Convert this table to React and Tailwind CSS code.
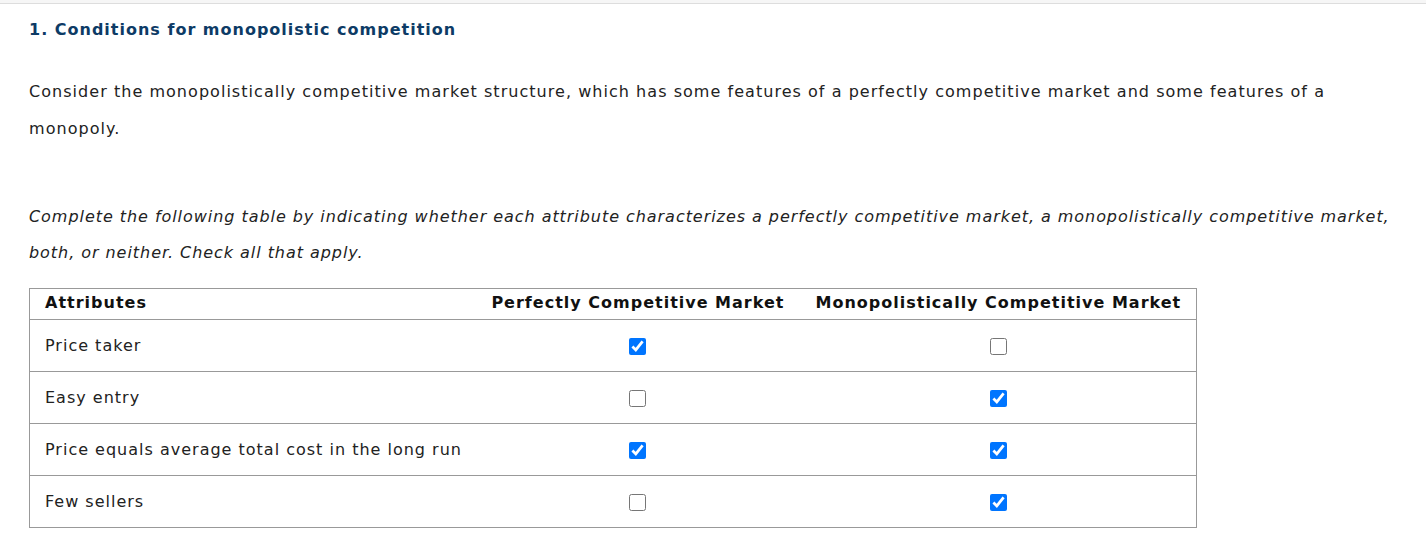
const ROWS = [
    { label: 'Price taker', perfect: true, mono: false },
    { label: 'Easy entry', perfect: false, mono: true },
    { label: 'Price equals average total cost in the long run', perfect: true, mono: true },
    { label: 'Few sellers', perfect: false, mono: true },
];

function Box({ checked }) {
    return (
        <input
            type="checkbox"
            checked={checked}
            readOnly
            className="m-0 h-[17px] w-[17px] align-middle accent-[#0075ff]"
        />
    );
}

export default function App() {
    return (
        <div className="min-h-[558px] bg-white text-[#222] font-['DejaVu_Sans',Verdana,sans-serif]">
            <div className="h-[4px] bg-[#f6f6f6] border-b border-[#dddddd]" />

            <div className="pl-[29px]">
                <h1 className="mt-[15px] text-[16px] leading-[22px] font-bold tracking-[1px] text-[#0d3b66]">
                    1. Conditions for monopolistic competition
                </h1>

                <p className="mt-[32px] text-[16px] leading-[37px] tracking-[1.04px] pr-[70px]">
                    Consider the monopolistically competitive market structure, which has some features of a perfectly competitive market and some features of a monopoly.
                </p>

                <p className="mt-[52px] text-[16px] leading-[36px] italic tracking-[0.95px]">
                    Complete the following table by indicating whether each attribute characterizes a perfectly competitive market, a monopolistically competitive market, both, or neither. Check all that apply.
                </p>

                <table className="mt-[17px] w-[1168px] border-collapse border border-[#999] text-[16px] tracking-[1px]">
                    <thead>
                        <tr className="h-[31px]">
                            <th className="w-[446px] pl-[15px] pb-[3px] text-left font-bold text-[#111]">Attributes</th>
                            <th className="w-[326px] pb-[3px] text-center font-bold text-[#111]">Perfectly Competitive Market</th>
                            <th className="w-[396px] pb-[3px] text-center font-bold text-[#111]">Monopolistically Competitive Market</th>
                        </tr>
                    </thead>
                    <tbody>
                        {ROWS.map((r) => (
                            <tr key={r.label} className="h-[52px] border-t border-[#999]">
                                <td className="pl-[15px]">{r.label}</td>
                                <td className="text-center"><Box checked={r.perfect} /></td>
                                <td className="text-center"><Box checked={r.mono} /></td>
                            </tr>
                        ))}
                    </tbody>
                </table>
            </div>
        </div>
    );
}
